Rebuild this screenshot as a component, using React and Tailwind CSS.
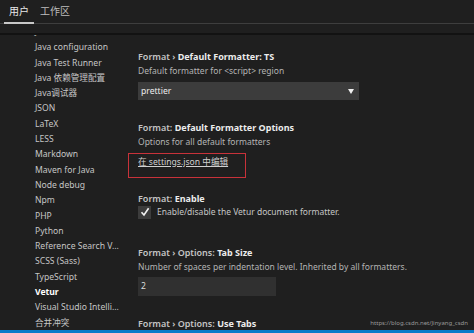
import React from 'react';

const font = { fontFamily: '"Noto Sans", "Noto Sans CJK SC", sans-serif' };

const extensions = [
  'Jake',
  'Java configuration',
  'Java Test Runner',
  'Java 依赖管理配置',
  'Java调试器',
  'JSON',
  'LaTeX',
  'LESS',
  'Markdown',
  'Maven for Java',
  'Node debug',
  'Npm',
  'PHP',
  'Python',
  'Reference Search V...',
  'SCSS (Sass)',
  'TypeScript',
  'Vetur',
  'Visual Studio Intelli...',
  '合并冲突',
];

const SettingTitle = ({ category, label }) => (
  <div className="h-[15px] leading-[15px] text-[9px] font-semibold text-[#c4c4c4] whitespace-nowrap">
    {category}
    <span className="font-bold text-[#ececec]">{label}</span>
  </div>
);

const SettingDesc = ({ children }) => (
  <div className="h-[14px] leading-[14px] text-[8.5px] text-[#b4b4b4] whitespace-nowrap">{children}</div>
);

const App = () => {
  return (
    <div className="w-[474px] h-[333px] bg-[#1f1f1f] overflow-hidden flex flex-col relative" style={font}>
      {/* tabs */}
      <div className="h-[24px] flex items-end gap-[6px] pl-[4px] border-b border-[#3e3e3e] shrink-0">
        <div className="h-[24px] px-[5px] flex items-center text-[10px] text-[#e8e8e8] border-b-2 border-[#c8c8c8] -mb-px">用户</div>
        <div className="h-[24px] flex items-center text-[10px] text-[#bdbdbd]">工作区</div>
      </div>
      <div className="h-[9px] shrink-0" />
      <div className="h-[2px] bg-[#121212] shrink-0" />

      <div className="flex flex-1 overflow-hidden">
        {/* left tree */}
        <div className="w-[138px] shrink-0 pl-[35px] overflow-hidden">
          <div className="mt-[-10px] flex flex-col">
            {extensions.map((name) => (
              <div
                key={name}
                className={`h-[15.3px] leading-[15.3px] text-[8.6px] whitespace-nowrap ${
                  name === 'Vetur' ? 'font-bold text-white' : 'text-[#c6c6c6]'
                }`}
              >
                {name}
              </div>
            ))}
          </div>
        </div>

        {/* settings */}
        <div className="flex-1 flex flex-col pt-[14px]">
          <SettingTitle category="Format › " label="Default Formatter: TS" />
          <SettingDesc>Default formatter for &lt;script&gt; region</SettingDesc>
          <div className="mt-[4px] w-[221px] h-[18px] bg-[#3c3c3c] flex items-center justify-between px-[3px]">
            <span className="text-[8.6px] text-[#ededed]">prettier</span>
            <svg width="6" height="5" viewBox="0 0 6 5" className="mr-[2px]">
              <path d="M0 0 H6 L3 5 Z" fill="#f0f0f0" />
            </svg>
          </div>

          <div className="mt-[20px]">
            <SettingTitle category="Format: " label="Default Formatter Options" />
          </div>
          <SettingDesc>Options for all default formatters</SettingDesc>
          <div className="relative mt-[6px] h-[14px] text-[8.6px] leading-[14px]">
            <span className="text-[#d0d0d0] underline whitespace-nowrap">在 settings.json 中编辑</span>
            <div className="absolute left-[-10px] top-[-2px] w-[118px] h-[25px] border border-[#c8323a]" />
          </div>

          <div className="mt-[22px]">
            <SettingTitle category="Format: " label="Enable" />
          </div>
          <div className="flex items-center gap-[6px] mt-[-1px] h-[14px]">
            <div className="w-[13px] h-[13px] bg-[#3c3c3c] flex items-center justify-center">
              <svg width="10" height="10" viewBox="0 0 10 10">
                <path d="M1.5 5.2 L4 8 L8.6 1.2" stroke="#f2f2f2" strokeWidth="1.6" fill="none" />
              </svg>
            </div>
            <span className="text-[8.5px] text-[#c6c6c6] whitespace-nowrap">Enable/disable the Vetur document formatter.</span>
          </div>

          <div className="mt-[26px]">
            <SettingTitle category="Format › Options: " label="Tab Size" />
          </div>
          <SettingDesc>Number of spaces per indentation level. Inherited by all formatters.</SettingDesc>
          <div className="mt-[3px] w-[138px] h-[19px] bg-[#303030] flex items-center px-[3px]">
            <span className="text-[8.6px] text-[#dcdcdc]">2</span>
          </div>

          <div className="mt-[20px] flex items-center justify-between pr-[6px]">
            <SettingTitle category="Format › Options: " label="Use Tabs" />
            <span className="text-[6px] text-[#9a9a9a] whitespace-nowrap">https://blog.csdn.net/Jinyang_csdn</span>
          </div>
        </div>
      </div>
      <div className="absolute left-0 bottom-0 w-full h-[3px] bg-[#0b7ac9]" />
    </div>
  );
};

export default App;
